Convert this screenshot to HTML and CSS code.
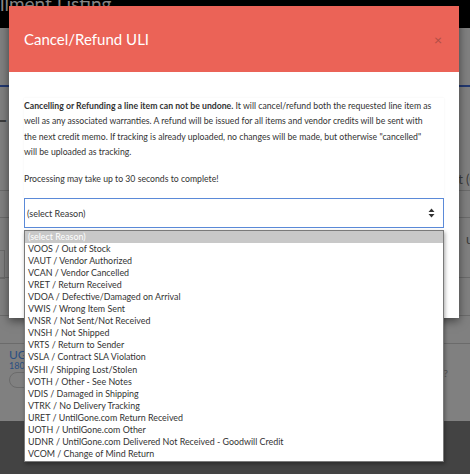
FILE: index.html
```html
<!DOCTYPE html>
<html lang="en">
<head>
  <meta charset="UTF-8">
  <title>Fulfillment Listing</title>
  <link rel="stylesheet" href="styles.css">
</head>
<body>

  <!-- page behind the modal, already dimmed -->
  <div class="page">
    <header class="topbar">
      <h1>Fulfillment Listing</h1>
    </header>

    <main class="content">
      <div class="tabs-rule"></div>
      <div class="heading-row">
        <span class="big-l">L</span>
      </div>
      <div class="row r1"><span class="right-label">t (C</span></div>
      <div class="row r2"></div>
      <div class="row r3">
        <span class="left-box"></span>
        <div class="right-stack">
          <span class="right-label">ur</span>
          <span class="right-label">a</span>
        </div>
      </div>
      <div class="row r4"></div>
      <div class="row r5"></div>
      <div class="r6">
        <div class="cell-ug">
          <span class="ug">UG</span>
          <span class="ug-num">180</span>
          <span class="pill"></span>
        </div>
        <span class="help">?</span>
      </div>
    </main>

    <footer class="footer"></footer>
  </div>

  <!-- modal -->
  <div class="modal">
    <div class="modal-header">
      <h3>Cancel/Refund ULI</h3>
      <span class="close">&times;</span>
    </div>
    <div class="modal-body">
      <div class="notice">
        <p><strong>Cancelling or Refunding a line item can not be undone.</strong> It will cancel/refund both the requested line item as well as any associated warranties. A refund will be issued for all items and vendor credits will be sent with the next credit memo. If tracking is already uploaded, no changes will be made, but otherwise "cancelled" will be uploaded as tracking.</p>
        <p>Processing may take up to 30 seconds to complete!</p>
      </div>
      <div class="select">
        <span>(select Reason)</span>
        <svg class="caret" width="7" height="10" viewBox="0 0 7 10"><path d="M3.5 0.5 L6.5 4 H0.5 Z M3.5 9.5 L6.5 6 H0.5 Z" fill="#333"/></svg>
      </div>
    </div>
  </div>

  <!-- open select list -->
  <ul class="options">
    <li class="selected">(select Reason)</li>
    <li>VOOS / Out of Stock</li>
    <li>VAUT / Vendor Authorized</li>
    <li>VCAN / Vendor Cancelled</li>
    <li>VRET / Return Received</li>
    <li>VDOA / Defective/Damaged on Arrival</li>
    <li>VWIS / Wrong Item Sent</li>
    <li>VNSR / Not Sent/Not Received</li>
    <li>VNSH / Not Shipped</li>
    <li>VRTS / Return to Sender</li>
    <li>VSLA / Contract SLA Violation</li>
    <li>VSHI / Shipping Lost/Stolen</li>
    <li>VOTH / Other - See Notes</li>
    <li>VDIS / Damaged in Shipping</li>
    <li>VTRK / No Delivery Tracking</li>
    <li>URET / UntilGone.com Return Received</li>
    <li>UOTH / UntilGone.com Other</li>
    <li>UDNR / UntilGone.com Delivered Not Received - Goodwill Credit</li>
    <li>VCOM / Change of Mind Return</li>
  </ul>

</body>
</html>
```

FILE: styles.css
```css
body {
  margin: 0;
  font-family: Lato, 'Open Sans', sans-serif;
  background-color: #434343;
  overflow: hidden;
}

/* dimmed page */
.page {
  height: 474px;
  display: flex;
  flex-direction: column;
}

.topbar {
  height: 28px;
  background-color: #000;
  overflow: hidden;
}

.topbar h1 {
  margin: -8px 0 0 -36px;
  font-size: 19px;
  font-weight: 400;
  color: #8a8a8a;
  white-space: nowrap;
}

.content {
  height: 393px;
  background-color: #808080;
}

.tabs-rule {
  margin-top: 57px;
  height: 2px;
  background-color: #223870;
}

.heading-row {
  height: 46px;
}

.big-l {
  display: block;
  margin: 11px 0 0 -6px;
  font-size: 24px;
  color: #3c3c3c;
}

.row {
  border-bottom: 1px solid #6b6b6b;
  display: flex;
  justify-content: space-between;
}

.r1 {
  height: 46px;
  align-items: flex-end;
}

.r2 {
  height: 26px;
}

.r3 {
  height: 59px;
  align-items: flex-start;
}

.r4 {
  height: 37px;
}

.r5 {
  height: 27px;
}

.right-label {
  margin-left: auto;
  margin-right: -8px;
  font-size: 13px;
  line-height: 16px;
  color: #3c3c3c;
}

.r1 .right-label {
  margin-bottom: 3px;
}

.right-stack {
  display: flex;
  flex-direction: column;
  gap: 11px;
  padding-top: 13px;
}

.left-box {
  width: 4px;
  height: 27px;
  margin-top: 32px;
  border: 1px solid #6b6b6b;
  border-left: none;
}

.r6 {
  display: flex;
  justify-content: space-between;
}

.cell-ug {
  display: flex;
  flex-direction: column;
  padding: 5px 0 0 9px;
}

.ug {
  font-size: 12px;
  color: #2b4f82;
  line-height: 12px;
}

.ug-num {
  font-size: 9px;
  color: #2b4f82;
  line-height: 10px;
}

.pill {
  width: 40px;
  height: 14px;
  margin-top: 1px;
  border: 1px solid #6b6b6b;
  border-radius: 8px;
}

.help {
  margin: 23px 22px 0 0;
  font-size: 10px;
  color: #555;
}

.footer {
  flex: 1;
  background-color: #434343;
}

/* modal */
.modal {
  position: absolute;
  left: 9px;
  top: 6px;
  width: 450px;
  background-color: #fff;
  box-shadow: 0 3px 9px rgba(0,0,0,0.5);
}

.modal-header {
  height: 66px;
  background-color: #eb6357;
  display: flex;
  align-items: center;
  justify-content: space-between;
  padding: 0 15px;
}

.modal-header h3 {
  margin: 0;
  font-size: 15px;
  font-weight: 400;
  color: #fff;
}

.close {
  font-size: 14px;
  color: #9c4740;
  opacity: 0.75;
  margin-right: 2px;
}

.modal-body {
  padding: 26px 15px 90px;
}

.notice {
  box-shadow: 0 0 2px rgba(0,0,0,0.06);
  padding-bottom: 12px;
}

.notice p {
  margin: 0 0 12px;
  padding-right: 8px;
  font-size: 8.7px;
  line-height: 15.3px;
  color: #333;
}

.notice p:last-child {
  margin-bottom: 0;
}

.select {
  height: 28px;
  border: 1px solid #5b8ad8;
  display: flex;
  align-items: center;
  justify-content: space-between;
  padding: 0 8px 0 2px;
  font-size: 9px;
  color: #333;
}

.caret {
  display: block;
}

/* native list, drawn open */
.options {
  position: absolute;
  left: 24px;
  top: 230px;
  width: 418px;
  margin: 0;
  padding: 0 0 1px;
  list-style: none;
  background-color: #fff;
  border: 1px solid #7a7a7a;
  box-shadow: 1px 2px 4px rgba(0,0,0,0.35);
}

.options li {
  height: 12.05px;
  line-height: 12px;
  padding-left: 3px;
  font-size: 8.9px;
  color: #333;
  white-space: nowrap;
}

.options li.selected {
  background-color: #c8c8c8;
  color: #fff;
}
```
